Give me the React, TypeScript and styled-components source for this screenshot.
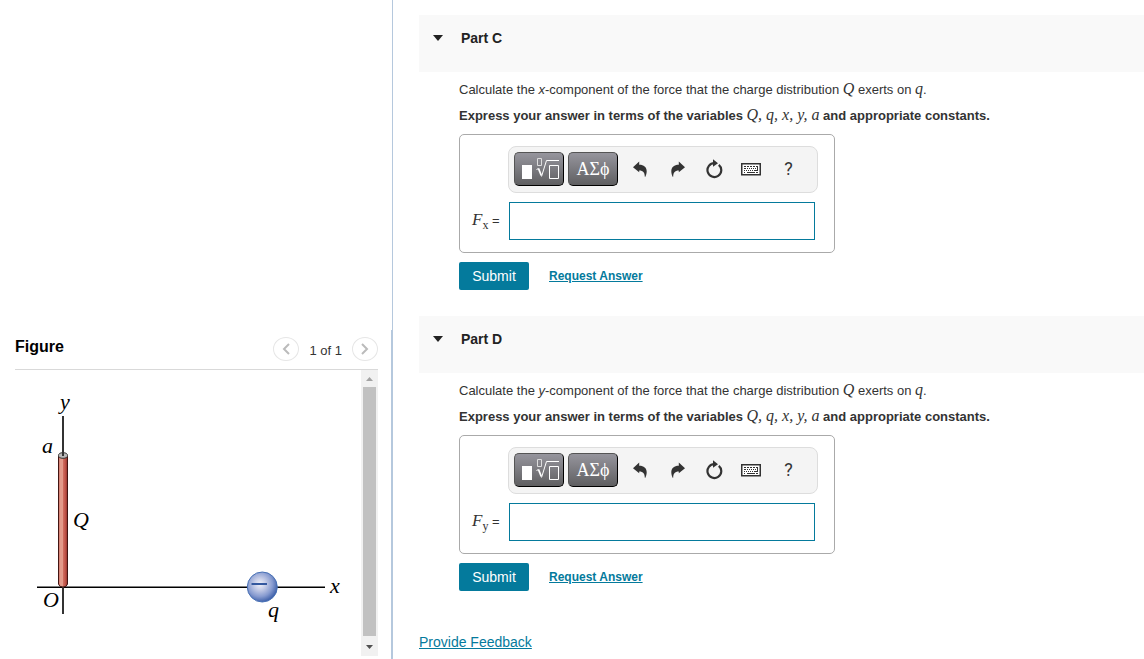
import React from "react";
import styled, { createGlobalStyle } from "styled-components";

const GlobalStyle = createGlobalStyle`
  *, *::before, *::after { box-sizing: border-box; }
  body {
    margin: 0;
    background: #fff;
    color: #333;
    font-family: "Liberation Sans", Arial, sans-serif;
    font-size: 13px;
    line-height: 16px;
  }
  h2, p { margin: 0; }
  button, input { font: inherit; color: inherit; }
  button { padding: 0; border: 0; background: none; cursor: pointer; }
`;

const teal = "#047a9c";
const divider = "#b5c8dd";

const Page = styled.div`
  display: grid;
  grid-template-columns: minmax(393px, 34%) minmax(0, 1fr);
  min-height: 100vh;
`;

const Sidebar = styled.aside`
  display: flex;
  flex-direction: column;
`;

const ProblemPane = styled.div`
  flex: 1;
  border-right: 1px solid ${divider};
`;

const FigurePane = styled.section`
  padding: 0 13px 3px 15px;
  border-right: 2px solid ${divider};
`;

const FigureHeader = styled.header`
  display: flex;
  justify-content: space-between;
  height: 40px;
  border-bottom: 1px solid #d9d9d9;
`;

const FigureTitle = styled.h2`
  padding-top: 8px;
  color: #000;
  font-size: 16px;
  line-height: 18px;
`;

const Pager = styled.nav`
  display: flex;
  gap: 10px;
  padding-top: 7px;
  line-height: 28px;
`;

const PagerButton = styled.button`
  display: grid;
  place-items: center;
  width: 26px;
  height: 24px;
  border: 1px solid #e6e6e6;
  border-radius: 50%;
`;

const FigureScroller = styled.div`
  display: flex;
  justify-content: space-between;
  height: 286px;
`;

const Scrollbar = styled.div`
  display: flex;
  flex-direction: column;
  align-items: center;
  width: 17px;
  background: #f1f1f1;
`;

const ScrollArrow = styled.svg`
  width: 17px;
  height: 17px;
`;

const ScrollThumb = styled.div`
  width: 13px;
  height: 249px;
  background: #c1c1c1;
`;

const Main = styled.main`
  padding: 15px 0 0 26px;
`;

const Part = styled.section`
  padding-bottom: 26px;
`;

const PartHeader = styled.header`
  display: flex;
  align-items: flex-start;
  height: 57px;
  padding: 15px 14px;
  background: #f9f9f9;
`;

const PartToggle = styled.button`
  display: flex;
  align-items: center;
  gap: 18px;
  color: #222;
  font-size: 14px;
  font-weight: bold;
`;

const PartBody = styled.div`
  display: flex;
  flex-direction: column;
  align-items: flex-start;
  gap: 10px;
  padding: 9px 0 0 40px;
`;

const Prompt = styled.p<{ $strong?: boolean }>`
  height: 16px;
  font-weight: ${(p) => (p.$strong ? "bold" : "normal")};
`;

const MathText = styled.span`
  font-family: "Liberation Serif", "Times New Roman", serif;
  font-size: 16px;
  font-style: italic;
  font-weight: normal;
`;

const AnswerBox = styled.div`
  display: flex;
  flex-direction: column;
  gap: 9px;
  margin-top: 1px;
  padding: 11px 16px 12px 0;
  border: 1px solid #aaa;
  border-radius: 5px;
`;

const Toolbar = styled.div`
  display: flex;
  align-items: center;
  width: 310px;
  height: 47px;
  margin-left: 48px;
  padding: 0 5px 2px;
  border: 1px solid #ddd;
  border-radius: 8px;
  background: #f4f4f4;
`;

const PaletteButton = styled.button`
  display: grid;
  place-items: center;
  width: 50px;
  height: 34px;
  margin-right: 4px;
  border: 1px solid #000;
  border-top-color: #555;
  border-left-color: #555;
  border-radius: 5px;
  background: linear-gradient(#96959d, #5f5f61);
  color: #fff;
  font-family: "Liberation Serif", serif;
  font-size: 18px;
`;

const ToolButton = styled.button`
  display: grid;
  place-items: center;
  width: 37px;
  height: 34px;
  color: #333;
  font-family: Roboto, sans-serif;
  font-size: 18px;
`;

const AnswerRow = styled.div`
  display: grid;
  grid-template-columns: 37px 306px;
  align-items: center;
  padding-left: 12px;
`;

const VariableName = styled.label`
  padding-bottom: 2px;
  font-size: 13px;
  white-space: nowrap;
`;

const Symbol = styled.i`
  font-family: "Liberation Serif", serif;
  font-size: 17px;
`;

const Subscript = styled.sub`
  font-family: "Liberation Serif", serif;
  font-size: 12px;
  line-height: 0;
`;

const AnswerInput = styled.input`
  width: 100%;
  height: 38px;
  padding: 0 8px;
  border: 1px solid ${teal};
  background: #fff;
`;

const Actions = styled.div`
  display: flex;
  align-items: center;
  gap: 20px;
  margin-top: -1px;
`;

const SubmitButton = styled.button`
  width: 70px;
  height: 28px;
  border-radius: 2px;
  background: ${teal};
  color: #fff;
  font-size: 14px;
`;

const ActionLink = styled.a<{ $large?: boolean }>`
  color: ${teal};
  font-size: ${(p) => (p.$large ? "14px" : "12px")};
  font-weight: ${(p) => (p.$large ? "normal" : "bold")};
`;

const Footer = styled.footer`
  padding-top: 17px;
`;

function RodFigure() {
  const label = {
    fontFamily: '"Liberation Serif", serif',
    fontStyle: "italic",
    fontSize: 22,
    fill: "#000",
  } as const;
  return (
    <svg width="346" height="286" viewBox="15 370 346 286" role="img" aria-label="Charged rod on the y axis and a negative charge on the x axis">
      <defs>
        <radialGradient id="charge" cx="0.42" cy="0.4" r="0.6">
          <stop offset="0" stopColor="#f2f2fa" />
          <stop offset="0.3" stopColor="#c9cfe8" />
          <stop offset="0.7" stopColor="#879bd0" />
          <stop offset="1" stopColor="#4263ab" />
        </radialGradient>
        <linearGradient id="rod">
          <stop offset="0" stopColor="#c9685c" />
          <stop offset="0.2" stopColor="#e39a8a" />
          <stop offset="0.45" stopColor="#e39a8a" />
          <stop offset="0.55" stopColor="#cf6b5e" />
          <stop offset="0.75" stopColor="#c25549" />
          <stop offset="1" stopColor="#8e2f2a" />
        </linearGradient>
      </defs>
      <path d="M37 587.2H325" stroke="#000" strokeWidth="1.6" />
      <path d="M63 586V614" stroke="#333" strokeWidth="2" />
      <path d="M58.500 456V584Q59 587 63 587Q67 587 67.500 584V456Z" fill="url(#rod)" stroke="#431412" />
      <ellipse cx="63" cy="455.500" rx="4.500" ry="2.800" fill="#b9b9b9" stroke="#333" />
      <path d="M63 416V456" stroke="#333" strokeWidth="2" />
      <circle cx="262.300" cy="587" r="15" fill="url(#charge)" stroke="#4770b5" />
      <path d="M251.500 584H267" stroke="#34589f" strokeWidth="2" />
      <text x="60" y="409" {...label}>y</text>
      <text x="42" y="453" {...label}>a</text>
      <text x="73" y="527" {...label}>Q</text>
      <text x="43" y="607" {...label}>O</text>
      <text x="330" y="593" {...label}>x</text>
      <text x="268" y="617" {...label}>q</text>
    </svg>
  );
}

function TemplatesIcon() {
  return (
    <svg width="42" height="22" viewBox="0 0 42 22" fill="none" stroke="#fff" aria-hidden="true">
      <path d="M4 7H14V21H4Z" fill="#fff" stroke="none" />
      <path d="M19.500 .5H23.500V7.500H19.500Z" stroke="#ddd" />
      <path d="M18.500 11.500L20.500 10.500" />
      <path d="M20.500 10.500L23.300 17.500" strokeWidth="1.800" />
      <path d="M23.500 18.500L28.500 2.500H41" />
      <path d="M31.500 7.500H40.500V20.500H31.500Z" />
    </svg>
  );
}

function ArrowIcon({ flip }: { flip?: boolean }) {
  return (
    <svg width="15" height="16" viewBox="0 0 15 16" aria-hidden="true">
      <path
        d="M0 6.200L6.200 0.500V3.800C10.500 3.700 13.700 6 13.700 10.200C13.700 12.500 13 14.200 12.400 15.800H11.800C11.900 11.800 10.300 9.500 6.200 9.500V11.200Z"
        fill="currentColor"
        transform={flip ? "matrix(-1 0 0 1 15 0)" : undefined}
      />
    </svg>
  );
}

function ResetIcon() {
  return (
    <svg width="19" height="20" viewBox="0 0 19 20" fill="none" aria-hidden="true">
      <path d="M9.500 4.200A6.900 6.900 0 1 0 13.800 5.800" stroke="currentColor" strokeWidth="2.200" />
      <path d="M8 0.300L13 4.200L8 7.800Z" fill="currentColor" />
    </svg>
  );
}

function KeyboardIcon() {
  return (
    <svg width="21" height="15" viewBox="0 0 21 15" fill="none" stroke="currentColor" aria-hidden="true">
      <rect x="0.750" y="2.750" width="18.500" height="11" fill="#fff" strokeWidth="1.500" />
      <path d="M3 5.500H17" strokeDasharray="2 1" />
      <path d="M3 7.500H5M6 7.500H7M8 7.500H9M10 7.500H11M12 7.500H13M14 7.500H15" />
      <path d="M3 9.500H4M5 9.500H6M7 9.500H8M9 9.500H10M11 9.500H12M13 9.500H17" />
      <path d="M16.500 5V10M3 11.500H4M6 11.500H14M15 11.500H17" />
    </svg>
  );
}

function AnswerPart({ name, axis }: { name: string; axis: "x" | "y" }) {
  const id = `force-${axis}`;
  return (
    <Part>
      <PartHeader>
        <PartToggle aria-expanded="true">
          <svg width="10" height="6" viewBox="0 0 10 6" aria-hidden="true">
            <path d="M0 0H10L5 6Z" fill="#222" />
          </svg>
          {name}
        </PartToggle>
      </PartHeader>
      <PartBody>
        <Prompt>
          Calculate the <i>{axis}</i>-component of the force that the charge distribution{" "}
          <MathText>Q</MathText> exerts on <MathText>q</MathText>.
        </Prompt>
        <Prompt $strong>
          Express your answer in terms of the variables <MathText>Q, q, x, y, a</MathText> and
          appropriate constants.
        </Prompt>
        <AnswerBox>
          <Toolbar role="toolbar" aria-label="Equation tools">
            <PaletteButton aria-label="Templates"><TemplatesIcon /></PaletteButton>
            <PaletteButton>ΑΣϕ</PaletteButton>
            <ToolButton aria-label="Undo"><ArrowIcon /></ToolButton>
            <ToolButton aria-label="Redo"><ArrowIcon flip /></ToolButton>
            <ToolButton aria-label="Reset"><ResetIcon /></ToolButton>
            <ToolButton aria-label="Keyboard shortcuts"><KeyboardIcon /></ToolButton>
            <ToolButton>?</ToolButton>
          </Toolbar>
          <AnswerRow>
            <VariableName htmlFor={id}>
              <Symbol>F</Symbol><Subscript>{axis}</Subscript> =
            </VariableName>
            <AnswerInput id={id} type="text" />
          </AnswerRow>
        </AnswerBox>
        <Actions>
          <SubmitButton>Submit</SubmitButton>
          <ActionLink href="#request">Request Answer</ActionLink>
        </Actions>
      </PartBody>
    </Part>
  );
}

export default function App() {
  return (
    <>
      <GlobalStyle />
      <Page>
        <Sidebar>
          <ProblemPane />
          <FigurePane>
            <FigureHeader>
              <FigureTitle>Figure</FigureTitle>
              <Pager aria-label="Figures">
                <PagerButton aria-label="Previous figure">
                  <svg width="8" height="12" viewBox="0 0 8 12" fill="none" stroke="#bbb" strokeWidth="2">
                    <path d="M7 1L2 6L7 11" />
                  </svg>
                </PagerButton>
                <span>1 of 1</span>
                <PagerButton aria-label="Next figure">
                  <svg width="8" height="12" viewBox="0 0 8 12" fill="none" stroke="#bbb" strokeWidth="2">
                    <path d="M1 1L6 6L1 11" />
                  </svg>
                </PagerButton>
              </Pager>
            </FigureHeader>
            <FigureScroller>
              <RodFigure />
              <Scrollbar aria-hidden="true">
                <ScrollArrow viewBox="0 0 17 17"><path d="M5 11L8.500 7L12 11Z" fill="#a3a3a3" /></ScrollArrow>
                <ScrollThumb />
                <ScrollArrow viewBox="0 0 17 17"><path d="M5 9L8.500 13L12 9Z" fill="#505050" /></ScrollArrow>
              </Scrollbar>
            </FigureScroller>
          </FigurePane>
        </Sidebar>
        <Main>
          <AnswerPart name="Part C" axis="x" />
          <AnswerPart name="Part D" axis="y" />
          <Footer>
            <ActionLink href="#feedback" $large>Provide Feedback</ActionLink>
          </Footer>
        </Main>
      </Page>
    </>
  );
}
